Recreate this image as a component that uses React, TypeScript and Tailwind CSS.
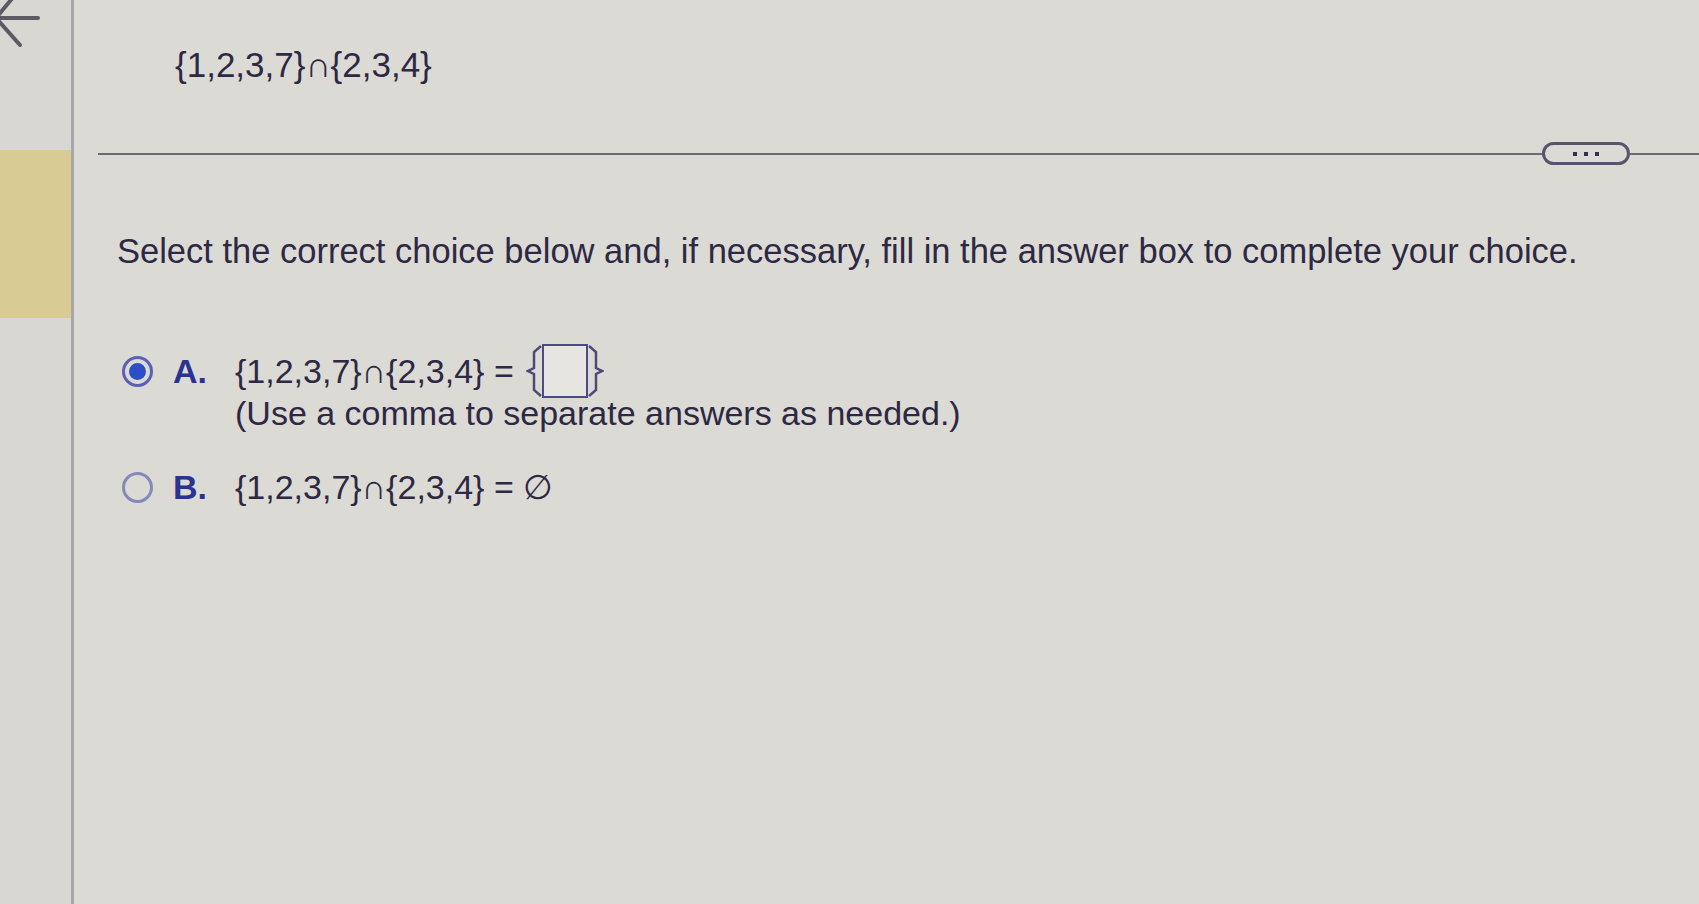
import React from "react";

const eq = "{1,2,3,7}\u2229{2,3,4}";

function BackArrow() {
  return (
    <svg width="44" height="50" viewBox="0 0 44 50" className="block">
      <path d="M-2 18 H38" stroke="#5c5b63" strokeWidth="4" strokeLinecap="round" />
      <path d="M15 -5 L-4 18 L20 45" stroke="#5c5b63" strokeWidth="4" fill="none" strokeLinecap="round" />
    </svg>
  );
}

function Radio({ checked }: { checked?: boolean }) {
  if (checked) {
    return (
      <span className="flex h-[31px] w-[31px] shrink-0 items-center justify-center rounded-full border-[3px] border-[#5a62b8]">
        <span className="h-[17px] w-[17px] rounded-full bg-[#2c4ec8]" />
      </span>
    );
  }
  return <span className="h-[31px] w-[31px] shrink-0 rounded-full border-[3px] border-[#8589ba]" />;
}

function AnswerBox() {
  return (
    <span className="ml-[12px] inline-flex items-center">
      <svg width="16" height="54" viewBox="0 0 16 54" className="block">
        <path d="M15 2 L8 8 V24 L2 27 L8 30 V46 L15 52" stroke="#4e4a78" strokeWidth="2.5" fill="none" />
      </svg>
      <span className="h-[54px] w-[46px] border-2 border-[#4e4a8a] bg-[#e6e5e1]" />
      <svg width="16" height="54" viewBox="0 0 16 54" className="block">
        <path d="M1 2 L8 8 V24 L14 27 L8 30 V46 L1 52" stroke="#4e4a78" strokeWidth="2.5" fill="none" />
      </svg>
    </span>
  );
}

export default function App() {
  return (
    <div
      className="flex h-[904px] w-full overflow-hidden bg-[#dcdad4] text-[#2d2843]"
      style={{ fontFamily: '"Liberation Sans", Arial, sans-serif' }}
    >
      <aside className="flex w-[74px] shrink-0 flex-col border-r-[3px] border-[#a8a6ab] bg-[#d9d7d1]">
        <div className="h-[150px]">
          <BackArrow />
        </div>
        <div className="h-[168px] bg-[#d8cb93]" />
      </aside>

      <main className="flex flex-1 flex-col">
        <div className="pl-[101px] pt-[45px] text-[35px] leading-[40px]">{eq}</div>

        <div className="mt-[57px] flex items-center pl-[24px]">
          <div className="h-[2px] flex-1 bg-[#6b6878]" />
          <div className="flex h-[23px] w-[88px] items-center justify-center gap-[7px] rounded-full border-[3px] border-[#58546e]">
            <span className="h-[4px] w-[4px] bg-[#35304d]" />
            <span className="h-[4px] w-[4px] bg-[#35304d]" />
            <span className="h-[4px] w-[4px] bg-[#35304d]" />
          </div>
          <div className="h-[2px] w-[69px] bg-[#6b6878]" />
        </div>

        <p className="mt-[66px] whitespace-nowrap pl-[43px] text-[34.5px] leading-[40px]">
          Select the correct choice below and, if necessary, fill in the answer box to complete your choice.
        </p>

        <div className="mt-[73px] flex flex-col pl-[48px] text-[34px] leading-[40px]">
          <div className="flex items-center">
            <Radio checked />
            <span className="ml-[20px] w-[62px] font-bold text-[#2a3490]">A.</span>
            <span>{eq} =</span>
            <AnswerBox />
          </div>
          <div className="mt-[-5px] pl-[113px]">(Use a comma to separate answers as needed.)</div>

          <div className="mt-[34px] flex items-center">
            <Radio />
            <span className="ml-[20px] w-[62px] font-bold text-[#2a3490]">B.</span>
            <span>
              {eq} = {"\u2205"}
            </span>
          </div>
        </div>
      </main>
    </div>
  );
}
